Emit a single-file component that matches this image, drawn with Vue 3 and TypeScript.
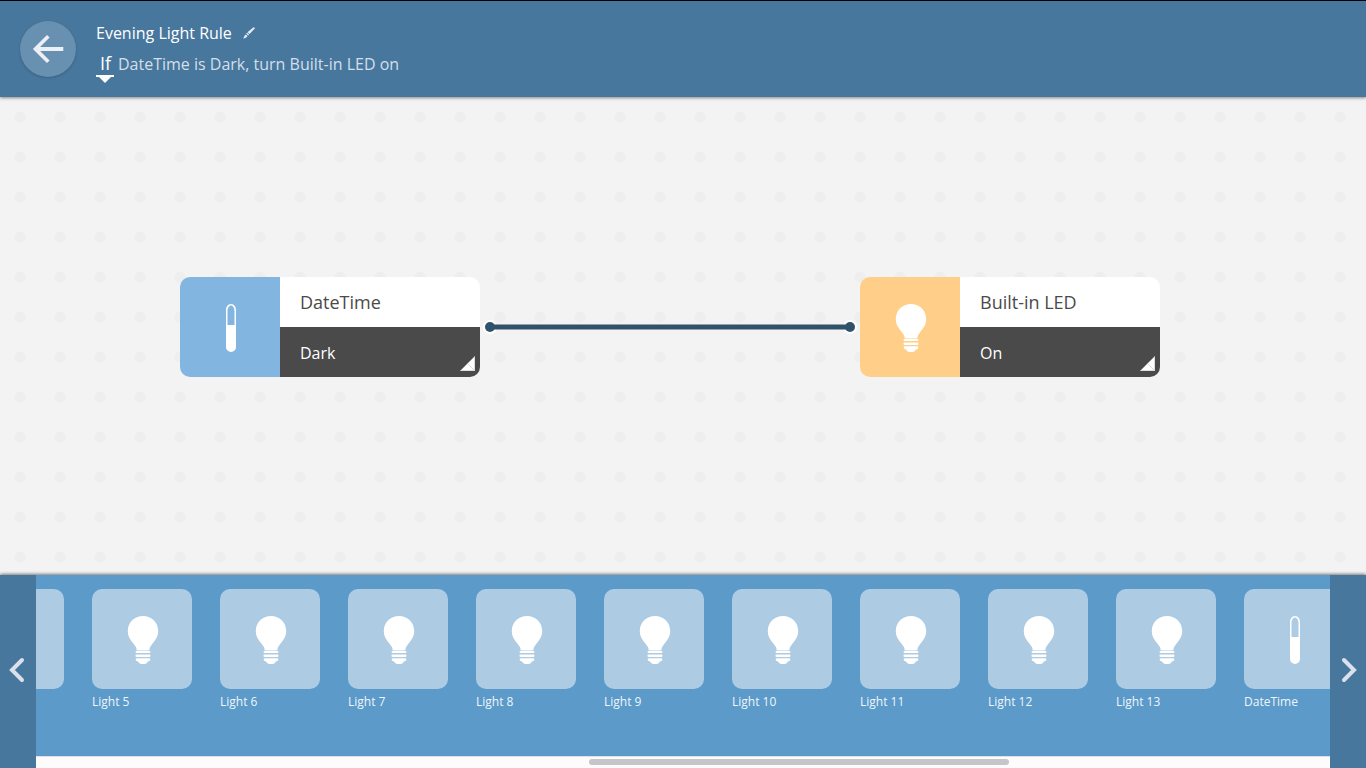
<script setup lang="ts">
type Kind = 'bulb' | 'sensor'

interface RuleNode {
  title: string
  state: string
  kind: Kind
  side: 'input' | 'output'
}

interface Device {
  label: string
  kind: Kind
}

const nodes: RuleNode[] = [
  { title: 'DateTime', state: 'Dark', kind: 'sensor', side: 'input' },
  { title: 'Built-in LED', state: 'On', kind: 'bulb', side: 'output' },
]

const lights: Device[] = Array.from({ length: 9 }, (_, i) => ({
  label: `Light ${i + 5}`,
  kind: 'bulb' as Kind,
}))

const devices: Device[] = [
  { label: '', kind: 'bulb' },
  ...lights,
  { label: 'DateTime', kind: 'sensor' },
]

const icons: Record<Kind, string> = {
  bulb:
    'M16 0C24.600 0 31.200 6.600 31.200 15C31.200 20.500 28.500 23.800 25.800 27.200C23.600 30 22.500 31.600 22.200 34.500H9.800C9.500 31.600 8.400 30 6.200 27.200C3.500 23.800 .8 20.500 .8 15C.8 6.600 7.400 0 16 0Z' +
    'M9.500 35H22.500Q23.500 35 23.500 36T22.500 37H9.500Q8.500 37 8.500 36T9.500 35Z' +
    'M9.500 38.600H22.500Q23.500 38.600 23.500 39.800T22.500 41H9.500Q8.500 41 8.500 39.800T9.500 38.600Z' +
    'M9.500 42.200H22.500Q23.500 42.500 23.300 43.800Q23 45.300 21 45.400Q19.500 48 17.500 48H14.500Q12.500 48 11 45.400Q9 45.300 8.700 43.800Q8.500 42.500 9.500 42.200Z',
  sensor:
    'M16 0C19 0 21 3 21 6V43A5 5 0 0 1 11 43V6C11 3 13 0 16 0Z' +
    'M16 1.500C14 1.500 12.500 4 12.500 7V21H19.500V7C19.500 4 18 1.500 16 1.500Z',
}
</script>

<template>
  <div class="editor">
    <header class="topbar">
      <button class="back" type="button" aria-label="Back">
        <svg width="32" height="30" viewBox="0 0 32 30" aria-hidden="true">
          <path d="M16.300 2.200L3.500 15L16.300 27.800" fill="none" stroke="currentColor" stroke-width="3.700" />
          <path d="M3.500 15H31.300" fill="none" stroke="currentColor" stroke-width="4" />
        </svg>
      </button>
      <div class="heading">
        <div class="title-row">
          <h1>Evening Light Rule</h1>
          <button class="edit" type="button" aria-label="Edit name">
            <svg width="12" height="12" viewBox="0 0 12 12" aria-hidden="true">
              <path d="M11 .2L12 1.200L6.600 7.100L4.400 5.200L10.200 .6ZM4 5.800L6.100 7.600L5.200 8.600L3.200 6.700ZM2.700 7.400L4.600 9.100Q4 10.800 .3 11.700Q.5 11 .9 10.300Q1.200 8.200 2.700 7.400Z" fill="currentColor" />
            </svg>
          </button>
        </div>
        <p class="sentence">
          <button class="mode" type="button">
            If
            <svg class="caret" width="14" height="7" viewBox="0 0 14 7" aria-hidden="true">
              <path d="M0 0H14L7 7Z" fill="currentColor" />
            </svg>
          </button>
          <span>DateTime is Dark, turn Built-in LED on</span>
        </p>
      </div>
    </header>

    <main class="canvas">
      <svg class="wire" width="374" height="14" viewBox="0 0 374 14" aria-hidden="true">
        <circle cx="7" cy="7" r="7" fill="#fff" />
        <circle cx="367" cy="7" r="7" fill="#fff" />
        <path d="M7 7H367" stroke="#30536b" stroke-width="5" />
        <circle cx="7" cy="7" r="5" fill="#30536b" />
        <circle cx="367" cy="7" r="5" fill="#30536b" />
      </svg>
      <article v-for="node in nodes" :key="node.title" class="node" :class="node.side">
        <div class="node-icon">
          <svg width="32" height="48" viewBox="0 0 32 48" aria-hidden="true">
            <path :d="icons[node.kind]" fill="currentColor" fill-rule="evenodd" />
          </svg>
        </div>
        <div class="node-body">
          <h2>{{ node.title }}</h2>
          <button class="state" type="button">
            {{ node.state }}
            <svg class="corner" width="15" height="15" viewBox="0 0 15 15" aria-hidden="true">
              <path d="M15 0V15H0Z" fill="#fff" />
              <path d="M7.500 7.500L14.500 14.500M14.500 1V14.500H1" fill="none" stroke="#c8c8c8" stroke-width="0.6" />
            </svg>
          </button>
        </div>
      </article>
    </main>

    <footer class="palette">
      <button class="scroll" type="button" aria-label="Scroll left">
        <svg width="16" height="26" viewBox="0 0 16 26" aria-hidden="true">
          <path d="M13 3L3 13L13 23" fill="none" stroke="currentColor" stroke-width="4" stroke-linecap="round" />
        </svg>
      </button>
      <div class="shelf">
        <ul class="devices">
          <li v-for="(device, i) in devices" :key="i">
            <button class="device" type="button">
              <span class="tile">
                <svg width="32" height="48" viewBox="0 0 32 48" aria-hidden="true">
                  <path :d="icons[device.kind]" fill="currentColor" fill-rule="evenodd" />
                </svg>
              </span>
              <span class="label">{{ device.label }}</span>
            </button>
          </li>
        </ul>
        <div class="track"><div class="thumb"></div></div>
      </div>
      <button class="scroll" type="button" aria-label="Scroll right">
        <svg width="16" height="26" viewBox="0 0 16 26" aria-hidden="true">
          <path d="M3 3L13 13L3 23" fill="none" stroke="currentColor" stroke-width="4" stroke-linecap="round" />
        </svg>
      </button>
    </footer>
  </div>
</template>

<style>
body {
  margin: 0;
}
</style>

<style scoped>
.editor {
  display: flex;
  flex-direction: column;
  min-height: 100vh;
  font-family: "Open Sans", "Noto Sans", sans-serif;
  color: #fff;
  background: #f3f3f3;
}

button {
  font: inherit;
  color: inherit;
  border: 0;
  padding: 0;
  background: none;
  cursor: pointer;
}

h1,
h2,
p,
ul {
  margin: 0;
  padding: 0;
  font-size: 16px;
  font-weight: 400;
}

svg {
  display: block;
}

.topbar {
  position: relative;
  z-index: 1;
  display: flex;
  align-items: center;
  gap: 20px;
  padding: 20px;
  background: #48779e;
  border-top: 1px solid #000;
  box-shadow: 0 1px 3px rgba(0, 0, 0, 0.45);
}

.back {
  display: flex;
  align-items: center;
  justify-content: center;
  width: 56px;
  height: 56px;
  border-radius: 50%;
  background: #6890b0;
  color: #eceff6;
  box-shadow: 0 1px 3px rgba(0, 0, 0, 0.2);
}

.title-row {
  display: flex;
  align-items: center;
  gap: 11px;
  line-height: 24px;
}

.edit {
  color: #e4ebf2;
}

.sentence {
  display: flex;
  align-items: center;
  gap: 4px;
  margin-top: 6px;
  line-height: 26px;
  color: #d3dfe9;
}

.mode {
  position: relative;
  width: 18px;
  padding-left: 1px;
  border-bottom: 2px solid #fff;
  font-size: 18px;
  line-height: 24px;
  color: #fff;
}

.caret {
  position: absolute;
  top: 100%;
  left: 2px;
  margin-top: 1px;
}

.canvas {
  position: relative;
  flex: 1;
  min-height: 400px;
  background: radial-gradient(circle at 20px 20px, #eee 5px, transparent 6px) 0 0 / 40px 40px #f3f3f3;
}

.node {
  position: absolute;
  top: 180px;
  display: flex;
  width: 300px;
  height: 100px;
  border-radius: 10px;
  overflow: hidden;
}

.input {
  left: 180px;
}

.output {
  left: 860px;
}

.node-icon {
  display: flex;
  align-items: center;
  justify-content: center;
  width: 100px;
  padding-top: 2px;
  padding-left: 2px;
  box-sizing: border-box;
  background: #82b6e0;
}

.output .node-icon {
  background: #ffce89;
}

.node-body {
  flex: 1;
  display: flex;
  flex-direction: column;
}

h2 {
  padding-left: 20px;
  background: #fff;
  color: #4a4a4a;
  font-size: 18px;
  line-height: 50px;
}

.state {
  position: relative;
  flex: 1;
  padding-left: 20px;
  padding-top: 2px;
  background: #4a4a4a;
  text-align: left;
}

.corner {
  position: absolute;
  right: 5px;
  bottom: 6px;
}

.wire {
  position: absolute;
  top: 223px;
  left: 483px;
}

.palette {
  position: relative;
  display: flex;
  background: #5b9ac9;
  box-shadow: 0 -1px 3px rgba(0, 0, 0, 0.5);
}

.scroll {
  display: flex;
  align-items: center;
  justify-content: center;
  flex: none;
  width: 36px;
  padding-right: 2px;
  padding-bottom: 3px;
  box-sizing: border-box;
  background: #48779e;
  color: #dae1ec;
}

.scroll:last-child {
  padding-right: 0;
  padding-left: 2px;
}

.shelf {
  flex: 1;
  min-width: 0;
  overflow: hidden;
}

.devices {
  display: flex;
  gap: 28px;
  height: 167px;
  padding-top: 14px;
  margin-left: -72px;
  list-style: none;
}

.device {
  display: block;
  width: 100px;
  text-align: left;
}

.tile {
  display: flex;
  align-items: center;
  justify-content: center;
  height: 100px;
  padding-top: 2px;
  padding-left: 2px;
  box-sizing: border-box;
  border-radius: 10px;
  background: #adcce3;
}

.label {
  display: block;
  margin-top: 4px;
  font-size: 12px;
  line-height: 18px;
  color: #eff5fa;
}

.track {
  padding: 2px 0 3px;
  border-top: 1px solid #dfe1e6;
  background: #fcfcfc;
}

.thumb {
  width: 32.5%;
  height: 6px;
  margin-left: 42.7%;
  border-radius: 3px;
  background: #c5c6ca;
}
</style>
